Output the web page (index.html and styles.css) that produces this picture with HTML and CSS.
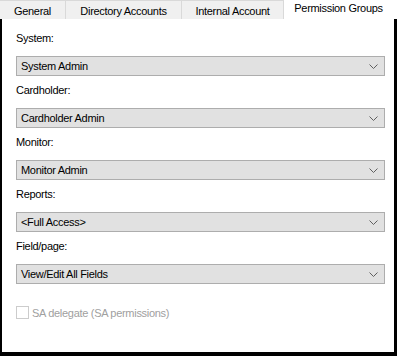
FILE: index.html
```html
<!DOCTYPE html>
<html>
<head>
    <title>Permission Groups</title>
    <link rel="stylesheet" href="styles.css">
</head>
<body>
    <div class="window">
        <div class="tabs">
            <div class="tab">General</div>
            <div class="tab">Directory Accounts</div>
            <div class="tab">Internal Account</div>
            <div class="tab active">Permission Groups</div>
        </div>
        <div class="panel">
            <div class="field">
                <div class="label">System:</div>
                <div class="combo"><span>System Admin</span><svg class="chev" width="9" height="5" viewBox="0 0 9 5"><path d="M0.5 0.5 L4.5 4.5 L8.5 0.5" fill="none" stroke="#606060" stroke-width="1"/></svg></div>
            </div>
            <div class="field">
                <div class="label">Cardholder:</div>
                <div class="combo"><span>Cardholder Admin</span><svg class="chev" width="9" height="5" viewBox="0 0 9 5"><path d="M0.5 0.5 L4.5 4.5 L8.5 0.5" fill="none" stroke="#606060" stroke-width="1"/></svg></div>
            </div>
            <div class="field">
                <div class="label">Monitor:</div>
                <div class="combo"><span>Monitor Admin</span><svg class="chev" width="9" height="5" viewBox="0 0 9 5"><path d="M0.5 0.5 L4.5 4.5 L8.5 0.5" fill="none" stroke="#606060" stroke-width="1"/></svg></div>
            </div>
            <div class="field">
                <div class="label">Reports:</div>
                <div class="combo"><span>&lt;Full Access&gt;</span><svg class="chev" width="9" height="5" viewBox="0 0 9 5"><path d="M0.5 0.5 L4.5 4.5 L8.5 0.5" fill="none" stroke="#606060" stroke-width="1"/></svg></div>
            </div>
            <div class="field">
                <div class="label">Field/page:</div>
                <div class="combo"><span>View/Edit All Fields</span><svg class="chev" width="9" height="5" viewBox="0 0 9 5"><path d="M0.5 0.5 L4.5 4.5 L8.5 0.5" fill="none" stroke="#606060" stroke-width="1"/></svg></div>
            </div>
            <label class="check">
                <span class="box"></span>
                <span>SA delegate (SA permissions)</span>
            </label>
        </div>
    </div>
</body>
</html>
```

FILE: styles.css
```css
body {
    margin: 0;
    font-family: "Liberation Sans", Arial, sans-serif;
    font-size: 11px;
    letter-spacing: -0.3px;
    color: #000;
    background: white;
}

.window {
    width: 397px;
    height: 356px;
    display: flex;
    flex-direction: column;
}

/* Tabs */
.tabs {
    display: flex;
    height: 19px;
    padding-right: 4px;
}

.tab {
    box-sizing: border-box;
    height: 19px;
    background: #f0f0f0;
    border: 1px solid #d9d9d9;
    border-left: none;
    border-bottom: none;
    padding: 3px 0 0 0;
    text-align: center;
    line-height: 15px;
}

.tab:nth-child(1) { width: 66px; }
.tab:nth-child(2) { width: 116px; }
.tab:nth-child(3) { width: 102px; }

.tab.active {
    flex: 1;
    background: white;
    border: none;
    padding-top: 1px;
}

/* Panel */
.panel {
    flex: 1;
    background: white;
    border-left: 2px solid #000;
    border-right: 3px solid #000;
    border-bottom: 4px solid #000;
    padding: 12px 9px 0 14px;
    display: flex;
    flex-direction: column;
    gap: 7px;
}

.field {
    display: flex;
    flex-direction: column;
    gap: 10px;
}

.label {
    line-height: 15px;
}

.combo {
    box-sizing: border-box;
    height: 20px;
    background: #e1e1e1;
    border: 1px solid #adadad;
    display: flex;
    align-items: center;
    justify-content: space-between;
    padding: 0 6px 0 4px;
}

.chev {
    display: block;
}

.check {
    display: flex;
    align-items: center;
    gap: 3px;
    margin-top: 15px;
    color: #a0a0a0;
}

.box {
    box-sizing: border-box;
    width: 13px;
    height: 13px;
    border: 1px solid #cccccc;
    background: white;
}
```
